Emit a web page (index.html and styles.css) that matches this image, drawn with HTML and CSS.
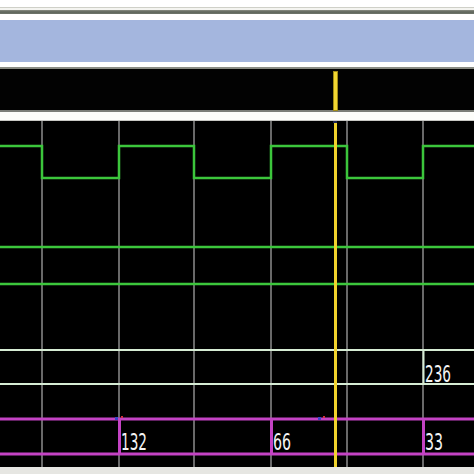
FILE: index.html
```html
<!DOCTYPE html>
<html>
<head>
  <title>Waveform</title>
  <link rel="stylesheet" href="styles.css">
</head>
<body>
  <div class="viewer">
    <div class="toolbar"></div>
    <div class="title-bar"></div>
    <div class="ruler">
      <div class="ruler-cursor"></div>
    </div>
    <div class="separator"></div>
    <div class="waves">
      <svg width="474" height="346" viewBox="0 0 474 346">
        <!-- time grid -->
        <g class="grid">
          <line x1="42" y1="0" x2="42" y2="346"/>
          <line x1="119" y1="0" x2="119" y2="346"/>
          <line x1="194" y1="0" x2="194" y2="346"/>
          <line x1="271" y1="0" x2="271" y2="346"/>
          <line x1="347" y1="0" x2="347" y2="346"/>
          <line x1="423" y1="0" x2="423" y2="346"/>
        </g>

        <!-- clock -->
        <path class="sig" d="M0 25 H42 V57 H119 V25 H194 V57 H271 V25 H347 V57 H423 V25 H474"/>
        <!-- constant bits -->
        <line class="sig" x1="0" y1="126" x2="474" y2="126"/>
        <line class="sig" x1="0" y1="163" x2="474" y2="163"/>

        <!-- pale bus -->
        <g class="bus-pale">
          <line x1="0" y1="229" x2="474" y2="229"/>
          <line x1="0" y1="263" x2="474" y2="263"/>
          <line x1="423.5" y1="229" x2="423.5" y2="263"/>
        </g>
        <text class="val" x="425" y="261" textLength="26" lengthAdjust="spacingAndGlyphs">236</text>

        <!-- magenta bus -->
        <g class="bus-mag">
          <line x1="0" y1="298" x2="474" y2="298"/>
          <line x1="0" y1="333" x2="474" y2="333"/>
          <line x1="119.5" y1="298" x2="119.5" y2="333"/>
          <line x1="271.5" y1="298" x2="271.5" y2="333"/>
          <line x1="423.5" y1="298" x2="423.5" y2="333"/>
        </g>
        <rect class="mark-b" x="115" y="296" width="3" height="3"/>
        <rect class="mark-r" x="121" y="295" width="2" height="2"/>
        <rect class="mark-b" x="318" y="296" width="3" height="3"/>
        <rect class="mark-r" x="323" y="295" width="2" height="2"/>
        <text class="val" x="121" y="329" textLength="26" lengthAdjust="spacingAndGlyphs">132</text>
        <text class="val" x="273" y="329" textLength="18" lengthAdjust="spacingAndGlyphs">66</text>
        <text class="val" x="425" y="329" textLength="18" lengthAdjust="spacingAndGlyphs">33</text>

        <!-- cursor -->
        <line class="cursor" x1="335.5" y1="0" x2="335.5" y2="346"/>
        <rect class="cursor-head" x="333" y="0" width="4" height="2"/>
      </svg>
    </div>
    <div class="footer"></div>
  </div>
</body>
</html>
```

FILE: styles.css
```css
/* waveform viewer */
body {
  margin: 0;
  background-color: #ffffff;
  overflow: hidden;
}
.viewer {
  width: 474px;
  height: 474px;
  display: flex;
  flex-direction: column;
}
.toolbar {
  height: 20px;
  background: linear-gradient(to bottom,
    #ffffff 0, #ffffff 7px,
    #cfd0c8 7px, #cfd0c8 8px,
    #f4f4f0 8px, #f4f4f0 10px,
    #8a8e84 10px, #5e645a 12px, #70766c 14px,
    #ffffff 14px, #ffffff 20px);
}
.title-bar {
  height: 42px;
  background-color: #a4b6de;
}
.ruler {
  position: relative;
  height: 41px;
  margin-top: 5px;
  background-color: #020202;
  border-top: 2px solid #8a8c84;
  border-bottom: 2px solid #7c7e78;
}
.ruler-cursor {
  position: absolute;
  left: 334px;
  top: 3px;
  bottom: 0;
  width: 3px;
  background-color: #f2d632;
  box-shadow: 0 0 0 1px #a08a14;
}
.separator {
  height: 8px;
  background-color: #fdfdfa;
  border-bottom: 1px solid #c8c8c4;
}
.waves {
  height: 346px;
  background-color: #000000;
}
.waves svg {
  display: block;
}
.grid line {
  stroke: #8c8c8c;
  stroke-width: 1.5;
}
.sig {
  fill: none;
  stroke: #3cc63c;
  stroke-width: 2.5;
}
.bus-pale line {
  stroke: #d6ecd4;
  stroke-width: 2;
}
.bus-mag line {
  stroke: #c443c4;
  stroke-width: 3;
}
.mark-b {
  fill: #3a44c8;
}
.mark-r {
  fill: #d03040;
}
.val {
  fill: #f4f4f4;
  font-family: "DejaVu Sans Condensed", "Liberation Sans Narrow", sans-serif;
  font-size: 23px;
}
.cursor {
  stroke: #f0d22c;
  stroke-width: 3;
}
.cursor-head {
  fill: #1c2450;
}
.footer {
  flex: 1;
  background-color: #e6e6e2;
}
```
